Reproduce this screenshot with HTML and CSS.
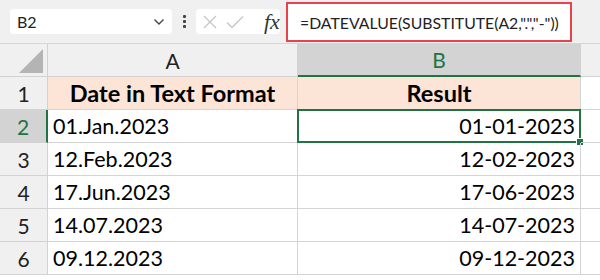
FILE: index.html
```html
<!DOCTYPE html>
<html>
<head>
  <title>DATEVALUE with SUBSTITUTE</title>
  <link rel="stylesheet" href="styles.css">
</head>
<body>

  <div class="toolbar">
    <div class="namebox">
      <span>B2</span>
      <svg width="12" height="8" viewBox="0 0 12 8"><path d="M1.5 1.5 L6 6 L10.5 1.5" fill="none" stroke="#444" stroke-width="1.4"/></svg>
    </div>
    <div class="dots"><i></i><i></i><i></i></div>
    <div class="fxbox">
      <svg width="16" height="16" viewBox="0 0 16 16"><path d="M2 2 L14 14 M14 2 L2 14" stroke="#c6c6c6" stroke-width="1.3"/></svg>
      <svg width="18" height="16" viewBox="0 0 18 16"><path d="M1 8.5 L6 13.5 L17 2.5" fill="none" stroke="#c6c6c6" stroke-width="1.3"/></svg>
      <span class="fx">fx</span>
    </div>
    <div class="formula">=DATEVALUE(SUBSTITUTE(A2,".","-"))</div>
  </div>

  <div class="sheet">
    <div class="corner"><span class="tri"></span></div>
    <div class="colhead">A</div>
    <div class="colhead active">B</div>
    <div class="colhead rest"></div>

    <div class="rowhead">1</div>
    <div class="cell title">Date in Text Format</div>
    <div class="cell title">Result</div>
    <div class="cell blank"></div>

    <div class="rowhead active">2</div>
    <div class="cell">01.Jan.2023</div>
    <div class="cell num selected">01-01-2023<span class="handle"></span></div>
    <div class="cell blank"></div>

    <div class="rowhead">3</div>
    <div class="cell">12.Feb.2023</div>
    <div class="cell num">12-02-2023</div>
    <div class="cell blank"></div>

    <div class="rowhead">4</div>
    <div class="cell">17.Jun.2023</div>
    <div class="cell num">17-06-2023</div>
    <div class="cell blank"></div>

    <div class="rowhead">5</div>
    <div class="cell">14.07.2023</div>
    <div class="cell num">14-07-2023</div>
    <div class="cell blank"></div>

    <div class="rowhead">6</div>
    <div class="cell">09.12.2023</div>
    <div class="cell num">09-12-2023</div>
    <div class="cell blank"></div>
  </div>

</body>
</html>
```

FILE: styles.css
```css
body {
  margin: 0;
  width: 600px;
  height: 280px;
  overflow: hidden;
  background: #fff;
  font-family: Lato, "Liberation Sans", sans-serif;
  color: #000;
}

.toolbar {
  height: 44px;
  background: #f0f0f0;
  display: flex;
  align-items: center;
  padding-left: 10px;
  box-sizing: border-box;
  border-bottom: 1px solid #d6d6d6;
}

.namebox {
  width: 162px;
  height: 25px;
  background: #fff;
  border-radius: 4px;
  display: flex;
  align-items: center;
  justify-content: space-between;
  padding: 0 7px 0 7px;
  box-sizing: border-box;
  font-size: 16px;
  color: #222;
}

.dots {
  width: 24px;
  display: flex;
  flex-direction: column;
  align-items: center;
  gap: 2px;
}

.dots i {
  width: 3px;
  height: 3px;
  background: #444;
  border-radius: 1px;
}

.fxbox {
  width: 84px;
  height: 25px;
  background: #fff;
  border-radius: 4px;
  display: flex;
  align-items: center;
  gap: 8px;
  padding-left: 6px;
  box-sizing: border-box;
}

.fx {
  font-family: "Liberation Serif", serif;
  font-style: italic;
  font-size: 22px;
  margin-left: 12px;
  color: #333;
}

.formula {
  margin-left: 6px;
  width: 286px;
  height: 40px;
  margin-top: 1px;
  background: #fff;
  border: 2px solid #e8424a;
  box-sizing: border-box;
  display: flex;
  align-items: center;
  padding-left: 12px;
  font-size: 15.8px;
  white-space: nowrap;
  color: #222;
}

.sheet {
  display: grid;
  grid-template-columns: 48px 250px 283px 1fr;
  grid-auto-rows: 33px;
}

.corner,
.colhead,
.rowhead {
  background: #f0f0f0;
  border-right: 1px solid #d2d2d2;
  border-bottom: 1px solid #d2d2d2;
  box-sizing: border-box;
}

.corner {
  position: relative;
}

.tri {
  position: absolute;
  right: 4px;
  bottom: 3px;
  width: 0;
  height: 0;
  border-left: 24px solid transparent;
  border-bottom: 24px solid #b4b4b4;
}

.colhead {
  display: flex;
  align-items: center;
  justify-content: center;
  font-size: 21px;
  color: #222;
}

.colhead.active {
  background: #d3d3d3;
  color: #217346;
  border-bottom: 2px solid #217346;
}

.colhead.rest {
  border-right: none;
}

.rowhead {
  display: flex;
  align-items: center;
  justify-content: center;
  font-size: 21px;
  color: #222;
}

.rowhead.active {
  background: #d3d3d3;
  color: #217346;
  border-right: 2px solid #217346;
}

.cell {
  border-right: 1px solid #d4d4d4;
  border-bottom: 1px solid #d4d4d4;
  box-sizing: border-box;
  display: flex;
  align-items: center;
  padding: 0 5px;
  font-size: 21.5px;
  position: relative;
}

.cell.title {
  background: #fce4d6;
  font-weight: bold;
  font-size: 23.5px;
  justify-content: center;
}

.cell.num {
  justify-content: flex-end;
}

.cell.blank {
  border-right: none;
}

.cell.selected {
  border: 2px solid #217346;
  margin: -1px 0 0 -1px;
  padding-right: 4px;
}

.handle {
  position: absolute;
  right: -5px;
  bottom: -5px;
  width: 6px;
  height: 6px;
  background: #217346;
  border: 1px solid #fff;
}
```
